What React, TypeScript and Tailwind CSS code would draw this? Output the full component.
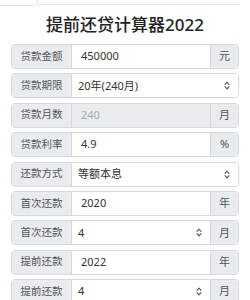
import React from "react";

type Row = {
  label: string;
  value: string;
  kind: "input" | "select" | "disabled";
  suffix?: string;
};

const rows: Row[] = [
  { label: "贷款金额", value: "450000", kind: "input", suffix: "元" },
  { label: "贷款期限", value: "20年(240月)", kind: "select" },
  { label: "贷款月数", value: "240", kind: "disabled", suffix: "月" },
  { label: "贷款利率", value: "4.9", kind: "input", suffix: "%" },
  { label: "还款方式", value: "等额本息", kind: "select" },
  { label: "首次还款", value: "2020", kind: "input", suffix: "年" },
  { label: "首次还款", value: "4", kind: "select", suffix: "月" },
  { label: "提前还款", value: "2022", kind: "input", suffix: "年" },
  { label: "提前还款", value: "4", kind: "select", suffix: "月" },
];

const Chevrons = () => (
  <svg width="6" height="9" viewBox="0 0 6 9" fill="none" stroke="#555" strokeWidth="1.1" strokeLinecap="round" strokeLinejoin="round">
    <path d="M1 3.3 L3 1.2 L5 3.3" />
    <path d="M1 5.7 L3 7.8 L5 5.7" />
  </svg>
);

const App: React.FC = () => {
  return (
    <div
      className="w-[250px] h-[300px] overflow-hidden bg-white text-[#495057]"
      style={{ fontFamily: '"Noto Sans", "Noto Sans CJK SC", sans-serif' }}
    >
      {/* top remnant of previous block */}
      <div className="flex items-start">
        <div className="w-[38px] h-[6px] border-b border-r border-[#e0e0e0] rounded-br-[5px]" />
        <div className="w-[202px] h-[5px] border-b border-[#e0e0e0]" />
      </div>

      <h1 className="mt-[7px] mb-[7px] text-center text-[17px] leading-[24px] font-medium text-[#222]">
        提前还贷计算器2022
      </h1>

      <div className="px-[11px] flex flex-col gap-[4.4px]">
        {rows.map((row, i) => (
          <div
            key={i}
            className="flex h-[25px] w-[228px] rounded-[4px] border border-[#d6d9dc] overflow-hidden text-[11px]"
          >
            <div className="w-[60px] shrink-0 flex items-center justify-center bg-[#e9ecef] border-r border-[#d6d9dc] text-[#555] text-[10.5px]">
              {row.label}
            </div>
            <div
              className={`flex-1 flex items-center ${
                row.kind === "select" ? "pl-[6px] pr-[8px] justify-between" : "pl-[9px]"
              } ${row.kind === "disabled" ? "bg-[#e9ecef] text-[#a7adb3]" : "bg-white text-[#333]"}`}
            >
              <span>{row.value}</span>
              {row.kind === "select" && <Chevrons />}
            </div>
            {row.suffix && (
              <div className="w-[28px] shrink-0 flex items-center justify-center bg-[#e9ecef] border-l border-[#d6d9dc] text-[#555]">
                {row.suffix}
              </div>
            )}
          </div>
        ))}
      </div>
    </div>
  );
};

export default App;
